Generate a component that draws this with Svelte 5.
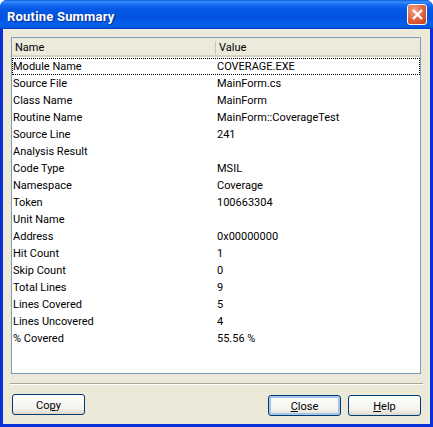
<script>
	const rows = [
		['Module Name', 'COVERAGE.EXE'],
		['Source File', 'MainForm.cs'],
		['Class Name', 'MainForm'],
		['Routine Name', 'MainForm::CoverageTest'],
		['Source Line', '241'],
		['Analysis Result', ''],
		['Code Type', 'MSIL'],
		['Namespace', 'Coverage'],
		['Token', '100663304'],
		['Unit Name', ''],
		['Address', '0x00000000'],
		['Hit Count', '1'],
		['Skip Count', '0'],
		['Total Lines', '9'],
		['Lines Covered', '5'],
		['Lines Uncovered', '4'],
		['% Covered', '55.56 %']
	];
</script>

<div class="window">
	<header class="titlebar">
		<span class="title">Routine Summary</span>
		<button class="close-x" aria-label="Close">
			<svg viewBox="0 0 13 13" width="13" height="13">
				<path d="M2 2 L11 11 M11 2 L2 11" stroke="#fff" stroke-width="2.4" fill="none"/>
			</svg>
		</button>
	</header>
	<div class="client">
		<div class="list">
			<div class="head">
				<div class="hcell name">Name</div>
				<div class="hcell">Value</div>
			</div>
			{#each rows as row, i}
				<div class="row" class:focused={i === 0}>
					<span class="name">{row[0]}</span>
					<span class="val">{row[1]}</span>
				</div>
			{/each}
		</div>
		<div class="sep"></div>
		<div class="buttons">
			<button class="btn"><span>Co<u>p</u>y</span></button>
			<div class="right">
				<button class="btn default"><span><u>C</u>lose</span></button>
				<button class="btn"><span><u>H</u>elp</span></button>
			</div>
		</div>
	</div>
</div>

<style>
	:global(body) {
		background: #fff;
	}

	.window {
		width: 433px;
		height: 427px;
		display: flex;
		flex-direction: column;
		box-sizing: border-box;
		background: #0831d9;
		border-radius: 7px 7px 0 0;
		overflow: hidden;
		font-family: Roboto, "Liberation Sans", sans-serif;
		font-size: 11px;
		color: #000;
	}

	.titlebar {
		height: 29px;
		flex-shrink: 0;
		display: flex;
		align-items: center;
		justify-content: space-between;
		padding: 0 6px 0 7px;
		background: linear-gradient(to bottom, #0a5ae0 0, #3b8ffa 2px, #1a70f2 4px, #0558e6 9px, #0353e0 18px, #0560ee 24px, #0458e0 27px, #0240c8 29px);
	}

	.title {
		color: #fff;
		font-weight: bold;
		font-size: 13px;
		letter-spacing: 0.2px;
		padding-top: 4px;
		text-shadow: 1px 1px 1px #0a2f8c;
	}

	.close-x {
		width: 20px;
		height: 21px;
		padding: 0;
		display: flex;
		align-items: center;
		justify-content: center;
		border: 1px solid #fff;
		border-radius: 3px;
		background: radial-gradient(circle at 35% 30%, #f0a48c, #e0603a 55%, #c03a18);
	}

	.client {
		flex: 1;
		margin: 0 3px 3px;
		padding: 8px 9px 0 8px;
		display: flex;
		flex-direction: column;
		background: #ece9d8;
	}

	.list {
		height: 337px;
		box-sizing: border-box;
		border: 1px solid #7f9db9;
		background: #fff;
		flex-shrink: 0;
	}

	.head {
		height: 19px;
		display: flex;
		align-items: center;
		box-sizing: border-box;
		padding-top: 3px;
		background: #ebeadb;
		border-bottom: 2px solid #d6d2c2;
	}

	.hcell {
		padding-left: 3px;
		box-sizing: border-box;
		height: 14px;
		line-height: 14px;
	}

	.hcell.name {
		width: 204px;
		border-right: 1px solid #c7c5b2;
	}

	.row {
		height: 17px;
		line-height: 17px;
		display: flex;
		box-sizing: border-box;
		padding-left: 1px;
		white-space: nowrap;
	}

	.row .name {
		width: 204px;
	}

	.row.focused {
		outline: 1px dotted #000;
		outline-offset: -1px;
		margin-top: 1px;
	}

	.sep {
		height: 2px;
		margin: 9px -2px 0 -1px;
		background: linear-gradient(to bottom, #aca899 50%, #fff 50%);
		flex-shrink: 0;
	}

	.buttons {
		display: flex;
		justify-content: space-between;
		align-items: flex-start;
		margin-top: 9px;
		padding-left: 1px;
	}

	.right {
		display: flex;
		gap: 7px;
		margin-top: 1px;
	}

	.btn {
		width: 73px;
		height: 21px;
		padding: 1px 0 0;
		border: 1px solid #003c74;
		border-radius: 3px;
		background: linear-gradient(to bottom, #fff, #f4f3ee 70%, #dcd8cc);
		font: inherit;
		color: #000;
	}

	.btn.default {
		box-shadow: inset 0 0 0 2px #a9c4ec;
	}
</style>
